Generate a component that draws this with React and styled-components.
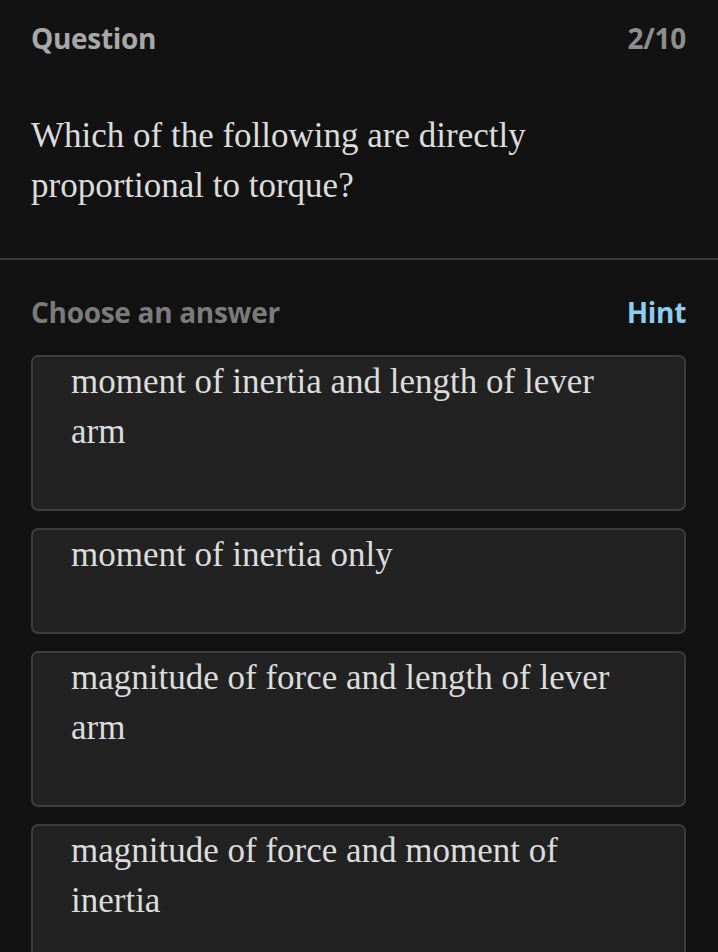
import styled, { createGlobalStyle } from 'styled-components';

const GlobalStyle = createGlobalStyle`
  html, body {
    margin: 0;
    padding: 0;
    background: #121212;
  }
`;

const answers = [
  'moment of inertia and length of lever arm',
  'moment of inertia only',
  'magnitude of force and length of lever arm',
  'magnitude of force and moment of inertia',
];

const App = () => {
  return (
    <Page>
      <GlobalStyle />
      <QuestionSection>
        <HeaderRow>
          <Label>Question</Label>
          <Counter>2/10</Counter>
        </HeaderRow>
        <Prompt>Which of the following are directly proportional to torque?</Prompt>
      </QuestionSection>
      <AnswerSection>
        <HeaderRow>
          <Label muted>Choose an answer</Label>
          <HintButton>Hint</HintButton>
        </HeaderRow>
        <AnswerList>
          {answers.map((answer) => (
            <AnswerCard key={answer}>{answer}</AnswerCard>
          ))}
        </AnswerList>
      </AnswerSection>
    </Page>
  );
};

const Page = styled.div`
  min-height: 952px;
  background: #121212;
  overflow: hidden;
`;

const QuestionSection = styled.section`
  padding: 19px 32px 47px 31px;
  border-bottom: 2px solid #3a3a3a;
`;

const HeaderRow = styled.div`
  display: flex;
  justify-content: space-between;
  align-items: center;
`;

const Label = styled.span`
  font-family: 'Open Sans', sans-serif;
  font-weight: 700;
  font-size: 28px;
  letter-spacing: -0.3px;
  color: ${props => (props.muted ? '#7b7b7b' : '#a8a8a8')};
`;

const Counter = styled.span`
  font-family: 'Open Sans', sans-serif;
  font-weight: 700;
  font-size: 28px;
  letter-spacing: -0.3px;
  color: #8e8e8e;
`;

const HintButton = styled.button`
  background: none;
  border: none;
  padding: 0;
  cursor: pointer;
  font-family: 'Open Sans', sans-serif;
  font-weight: 700;
  font-size: 28px;
  letter-spacing: -0.3px;
  color: #8ccdf0;
`;

const Prompt = styled.p`
  margin: 54px 0 0;
  font-family: 'Liberation Serif', serif;
  font-size: 35px;
  line-height: 50px;
  color: #dcdcdc;
  max-width: 540px;
`;

const AnswerSection = styled.section`
  padding: 33px 32px 0 31px;
`;

const AnswerList = styled.div`
  display: flex;
  flex-direction: column;
  gap: 17px;
  margin-top: 24px;
`;

const AnswerCard = styled.div`
  background: #222222;
  border: 2px solid #3c3c3c;
  border-radius: 7px;
  padding: 0 54px 52px 38px;
  font-family: 'Liberation Serif', serif;
  font-size: 35px;
  line-height: 50px;
  color: #dcdcdc;
`;

export default App;
